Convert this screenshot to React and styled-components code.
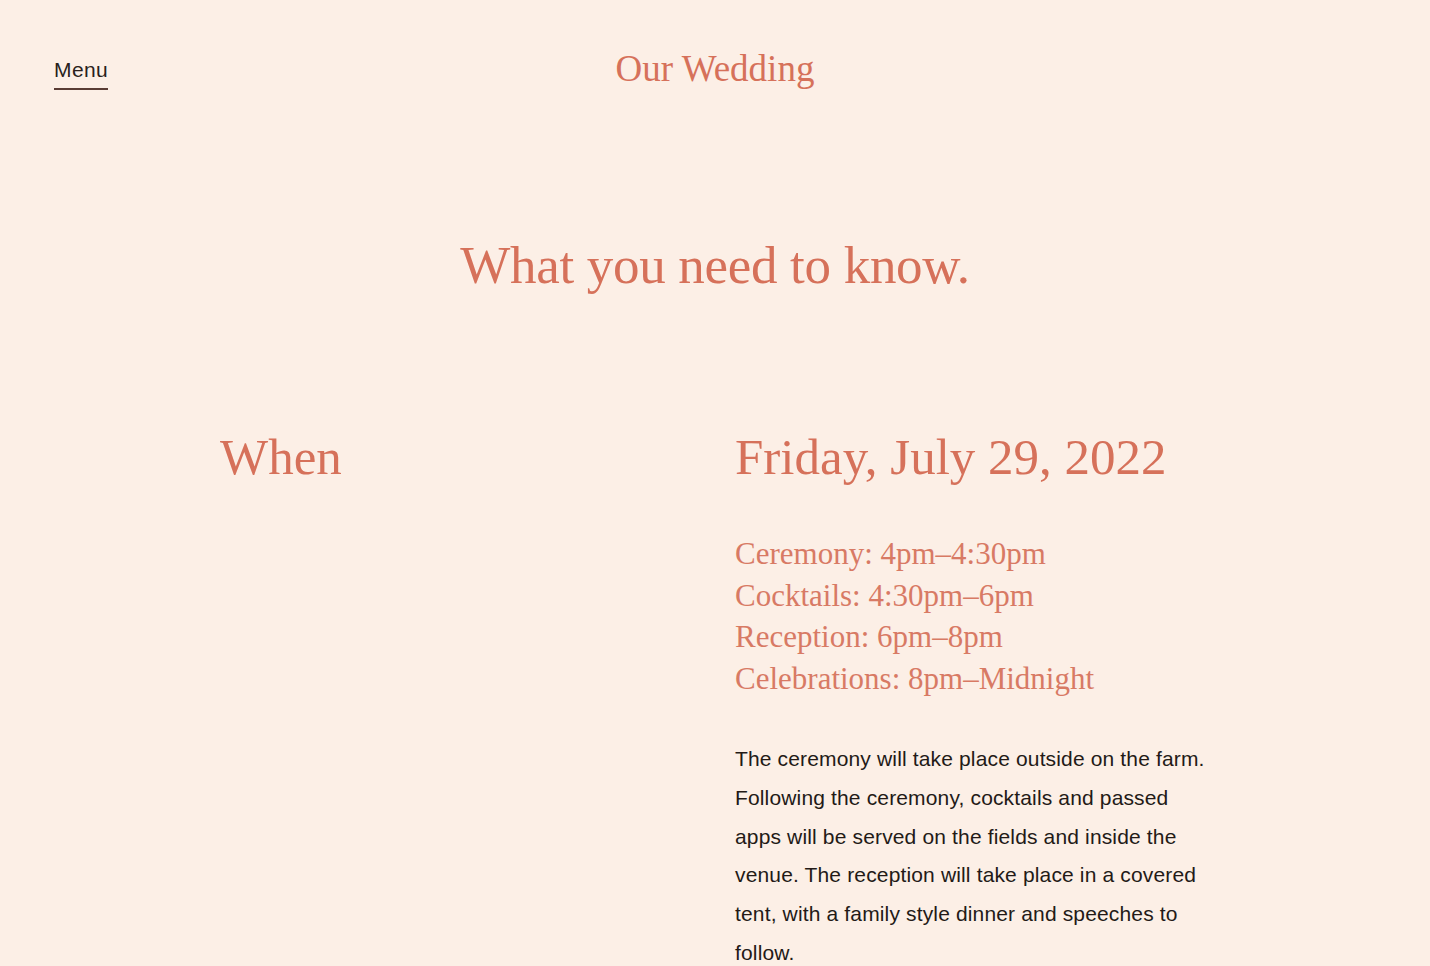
import styled, { createGlobalStyle } from "styled-components";

const GlobalStyle = createGlobalStyle`
  html, body {
    margin: 0;
    padding: 0;
    background-color: #fcefe6;
  }
  body {
    font-family: "Liberation Sans", Arial, sans-serif;
    -webkit-font-smoothing: antialiased;
  }
`;

const accent = "#d6715a";

const Page = styled.div`
  min-height: 966px;
  background-color: #fcefe6;
  overflow: hidden;
`;

const Header = styled.header`
  display: grid;
  grid-template-columns: 1fr auto 1fr;
  align-items: start;
  padding: 46px 54px 0;
`;

const MenuLink = styled.a`
  justify-self: start;
  font-family: "Liberation Sans", Arial, sans-serif;
  font-size: 21px;
  line-height: 28px;
  letter-spacing: 0.4px;
  color: #2a1f1c;
  text-decoration: none;
  padding-bottom: 4px;
  border-bottom: 2px solid #5a3c34;
  margin-top: 10px;
`;

const SiteTitle = styled.h1`
  margin: 0;
  font-family: "Liberation Serif", "Times New Roman", serif;
  font-weight: 400;
  font-size: 37px;
  line-height: 46px;
  color: ${accent};
`;

const Intro = styled.h2`
  margin: 143px 0 0;
  text-align: center;
  font-family: "Liberation Serif", "Times New Roman", serif;
  font-weight: 400;
  font-size: 53px;
  line-height: 60px;
  letter-spacing: -0.3px;
  color: ${accent};
`;

const Section = styled.section`
  display: grid;
  grid-template-columns: 515px 475px;
  width: 990px;
  margin: 132px auto 0;
`;

const SectionLabel = styled.h3`
  margin: 0;
  font-family: "Liberation Serif", "Times New Roman", serif;
  font-weight: 400;
  font-size: 51px;
  line-height: 60px;
  color: ${accent};
`;

const Details = styled.div`
  display: flex;
  flex-direction: column;
`;

const DateLine = styled.h3`
  margin: 0;
  font-family: "Liberation Serif", "Times New Roman", serif;
  font-weight: 400;
  font-size: 51px;
  line-height: 60px;
  color: ${accent};
`;

const Schedule = styled.ul`
  list-style: none;
  margin: 46px 0 0;
  padding: 0;
`;

const ScheduleItem = styled.li`
  font-family: "Liberation Serif", "Times New Roman", serif;
  font-size: 31px;
  line-height: 41.5px;
  color: ${accent};
  opacity: 0.92;
`;

const Body = styled.p`
  margin: 41px 0 0;
  font-family: "Liberation Sans", Arial, sans-serif;
  font-size: 21px;
  line-height: 38.8px;
  letter-spacing: 0.15px;
  color: #231a17;
`;

const schedule = [
  "Ceremony: 4pm–4:30pm",
  "Cocktails: 4:30pm–6pm",
  "Reception: 6pm–8pm",
  "Celebrations: 8pm–Midnight",
];

export default function App() {
  return (
    <Page>
      <GlobalStyle />
      <Header>
        <MenuLink href="#">Menu</MenuLink>
        <SiteTitle>Our Wedding</SiteTitle>
        <span />
      </Header>

      <Intro>What you need to know.</Intro>

      <Section>
        <SectionLabel>When</SectionLabel>
        <Details>
          <DateLine>Friday, July 29, 2022</DateLine>
          <Schedule>
            {schedule.map((item) => (
              <ScheduleItem key={item}>{item}</ScheduleItem>
            ))}
          </Schedule>
          <Body>
            The ceremony will take place outside on the farm. Following the
            ceremony, cocktails and passed apps will be served on the fields
            and inside the venue. The reception will take place in a covered
            tent, with a family style dinner and speeches to follow.
          </Body>
        </Details>
      </Section>
    </Page>
  );
}
